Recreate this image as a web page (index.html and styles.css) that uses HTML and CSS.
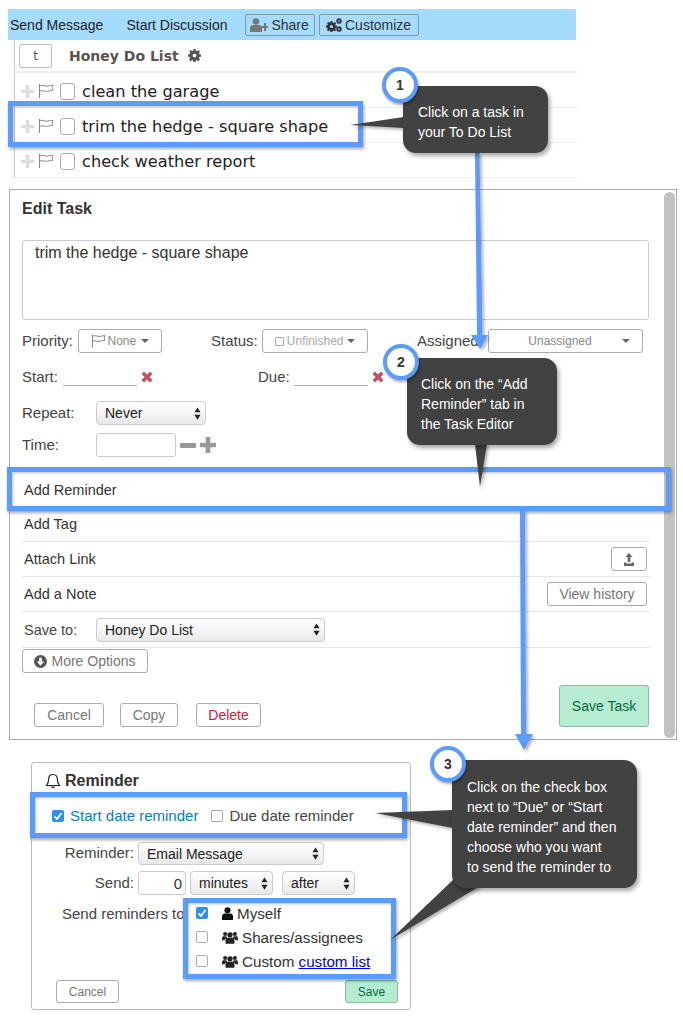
FILE: index.html
```html
<!DOCTYPE html>
<html lang="en">
<head>
    <meta charset="UTF-8">
    <title>Add a reminder to a task</title>
    <link rel="stylesheet" href="styles.css">
</head>
<body>
    <svg class="icon-defs" width="0" height="0">
        <symbol id="i-flag" viewBox="0 0 16 14">
            <path d="M1.5 0v14M2 2c3-2 5 1 8 0 2-.6 4-.6 5-.6-1 1.500-1 3.200-.2 5-2-.2-3 .2-5 .8-3 .8-5-1.500-7.800 0" fill="none" stroke="currentColor" stroke-width="1"/>
        </symbol>
        <symbol id="i-plus" viewBox="0 0 14 14">
            <path d="M5 0h4v5h5v4H9v5H5V9H0V5h5z" fill="currentColor"/>
        </symbol>
        <symbol id="i-x" viewBox="0 0 12 12">
            <path d="M.5 3L3 .5l3 3 3-3L11.500 3l-3 3 3 3L9 11.500l-3-3-3 3L.5 9l3-3z" fill="currentColor"/>
        </symbol>
        <symbol id="i-gear" viewBox="0 0 14 14">
            <path fill-rule="evenodd" d="M5.800 0h2.400l.3 1.900 1.100.5 1.600-1.100 1.700 1.700-1.100 1.600.5 1.100 1.900.3v2.400l-1.900.3-.5 1.100 1.100 1.600-1.700 1.700-1.600-1.100-1.100.5-.3 1.900H5.800l-.3-1.900-1.100-.5-1.600 1.100-1.700-1.700 1.100-1.600-.5-1.100L0 8.200V5.800l1.900-.3.5-1.100-1.100-1.600 1.700-1.700 1.600 1.100 1.100-.5zM7 5a2 2 0 1 0 0 4 2 2 0 0 0 0-4z" fill="currentColor"/>
        </symbol>
        <symbol id="i-user" viewBox="0 0 12 14">
            <circle cx="6" cy="3.500" r="3.300" fill="currentColor"/>
            <path d="M0 14V10c0-2 1.500-3 3-3h6c1.500 0 3 1 3 3v4z" fill="currentColor"/>
        </symbol>
        <symbol id="i-group" viewBox="0 0 18 14">
            <circle cx="9" cy="4" r="3" fill="currentColor"/>
            <circle cx="3.500" cy="3" r="2.300" fill="currentColor"/>
            <circle cx="14.500" cy="3" r="2.300" fill="currentColor"/>
            <path d="M4 14V10c0-2 1-2.800 2.500-2.800h5C13 7.200 14 8 14 10v4zM0 10V7.500C0 6 1 5.500 2 5.500h3c0 1 .5 1.500 1 2-2 .3-3 1-3 2.500zM18 10V7.500c0-1.500-1-2-2-2h-3c0 1-.5 1.500-1 2 2 .3 3 1 3 2.500z" fill="currentColor"/>
        </symbol>
        <symbol id="i-updown" viewBox="0 0 8 14">
            <path d="M4 0l3.500 5.500h-7zM4 14L.5 8.500h7z" fill="currentColor"/>
        </symbol>
        <symbol id="i-check" viewBox="0 0 12 12">
            <path d="M2.500 6.500l2.500 2.500 4.500-6" fill="none" stroke="#fff" stroke-width="1.800"/>
        </symbol>
    </svg>

    <div class="topbar">
        <span class="bar-link">Send Message</span>
        <span class="bar-link">Start Discussion</span>
        <span class="bar-btn btn-share">
            <svg class="bar-icon" width="18" height="14" viewBox="0 0 18 14"><use href="#i-user" width="12" height="14"/><path d="M11 8h3V5h2v3h2v2h-2v3h-2v-3h-3z" fill="currentColor"/></svg>
            Share
        </span>
        <span class="bar-btn btn-customize">
            <svg class="bar-icon dark" width="16" height="14" viewBox="0 0 16 14"><use href="#i-gear" y="3" width="11" height="11"/><use href="#i-gear" x="10" width="6" height="6"/><use href="#i-gear" x="10" y="8" width="6" height="6"/></svg>
            Customize
        </span>
    </div>

    <div class="task-list">
        <div class="list-head">
            <span class="t-btn">t</span>
            <span class="list-name">Honey Do List</span>
            <svg class="list-gear" width="13" height="13"><use href="#i-gear"/></svg>
        </div>
        <div class="task-row">
            <svg class="task-plus" width="13" height="13"><use href="#i-plus"/></svg>
            <svg class="task-flag" width="16" height="14"><use href="#i-flag"/></svg>
            <span class="task-check"></span>
            <span>clean the garage</span>
        </div>
        <div class="task-row">
            <svg class="task-plus" width="13" height="13"><use href="#i-plus"/></svg>
            <svg class="task-flag" width="16" height="14"><use href="#i-flag"/></svg>
            <span class="task-check"></span>
            <span>trim the hedge - square shape</span>
        </div>
        <div class="task-row">
            <svg class="task-plus" width="13" height="13"><use href="#i-plus"/></svg>
            <svg class="task-flag" width="16" height="14"><use href="#i-flag"/></svg>
            <span class="task-check"></span>
            <span>check weather report</span>
        </div>
    </div>

    <div class="edit-panel">
        <div class="edit-body">
            <h2 class="panel-title">Edit Task</h2>
            <div class="task-text">trim the hedge - square shape</div>

            <div class="field-row first">
                <div class="field f-priority">
                    <label>Priority:</label>
                    <span class="btn btn-priority">
                        <svg width="15" height="14"><use href="#i-flag"/></svg>
                        None<i class="caret"></i>
                    </span>
                </div>
                <div class="field f-status">
                    <label>Status:</label>
                    <span class="btn btn-status"><i class="mini-box"></i>Unfinished<i class="caret"></i></span>
                </div>
                <div class="field">
                    <label class="assigned-label">Assigned:</label>
                    <span class="btn btn-assigned"><span>Unassigned</span><i class="caret"></i></span>
                </div>
            </div>

            <div class="field-row dates">
                <div class="field f-start">
                    <label>Start:</label>
                    <span class="date-line"></span>
                    <svg class="clear-x" width="12" height="12"><use href="#i-x"/></svg>
                </div>
                <div class="field f-due">
                    <label>Due:</label>
                    <span class="date-line"></span>
                    <svg class="clear-x" width="12" height="12"><use href="#i-x"/></svg>
                </div>
            </div>

            <div class="field-row repeat">
                <label class="wide-label">Repeat:</label>
                <span class="sel sel-repeat">Never<svg width="7" height="13"><use href="#i-updown"/></svg></span>
            </div>

            <div class="field-row time">
                <label class="wide-label">Time:</label>
                <span class="text-input time-input"></span>
                <span class="time-minus"></span>
                <svg class="time-plus" width="16" height="16"><use href="#i-plus"/></svg>
            </div>

            <div class="tabs">
                <div class="tab-row plain">Add Reminder</div>
                <div class="tab-row">Add Tag</div>
                <div class="tab-row">
                    Attach Link
                    <span class="btn btn-upload">
                        <svg width="12" height="13" viewBox="0 0 12 13"><path d="M6 0l3.500 4H7.300v5H4.700V4H2.500zM1 9.500h2.500v1h5v-1H11V13H1z" fill="currentColor"/></svg>
                    </span>
                </div>
                <div class="tab-row">
                    Add a Note
                    <span class="btn btn-history">View history</span>
                </div>
                <div class="tab-row save-to">
                    <label class="save-label">Save to:</label>
                    <span class="sel sel-list">Honey Do List<svg width="7" height="13"><use href="#i-updown"/></svg></span>
                </div>
            </div>

            <span class="btn btn-more">
                <svg width="13" height="13" viewBox="0 0 14 14"><path fill-rule="evenodd" d="M7 0a7 7 0 1 1 0 14A7 7 0 0 1 7 0zM5.500 3v4H3l4 4.500L11 7H8.500V3z" fill="currentColor"/></svg>
                More Options
            </span>

            <div class="edit-foot">
                <div class="foot-left">
                    <span class="btn btn-foot btn-cancel">Cancel</span>
                    <span class="btn btn-foot btn-copy">Copy</span>
                    <span class="btn btn-foot btn-delete">Delete</span>
                </div>
                <span class="btn btn-save-task">Save Task</span>
            </div>
        </div>
        <div class="scrollbar"></div>
    </div>

    <div class="reminder-panel">
        <h2 class="reminder-title">
            <svg width="16" height="16" viewBox="0 0 16 16"><path d="M8 1.500c-2.800 0-4.300 2-4.300 4.500 0 3.500-1 5-2.200 6.500h13c-1.200-1.500-2.200-3-2.200-6.500 0-2.500-1.500-4.500-4.300-4.500zM6.500 13.500a1.600 1.600 0 0 0 3 0" fill="none" stroke="#222" stroke-width="1.200"/></svg>
            Reminder
        </h2>
        <div class="date-checks">
            <span class="check on"><svg width="12" height="12"><use href="#i-check"/></svg></span>
            <span class="start-label">Start date reminder</span>
            <span class="check"></span>
            <span>Due date reminder</span>
        </div>
        <div class="rem-row r-type">
            <label class="rem-label">Reminder:</label>
            <span class="sel sel-type">Email Message<svg width="7" height="13"><use href="#i-updown"/></svg></span>
        </div>
        <div class="rem-row r-send">
            <label class="rem-label">Send:</label>
            <span class="text-input send-input">0</span>
            <span class="sel sel-minutes">minutes<svg width="7" height="13"><use href="#i-updown"/></svg></span>
            <span class="sel sel-after">after<svg width="7" height="13"><use href="#i-updown"/></svg></span>
        </div>
        <div class="rem-to">
            <label class="to-label">Send reminders to:</label>
            <div class="to-list">
                <div class="to-row">
                    <span class="check on"><svg width="12" height="12"><use href="#i-check"/></svg></span>
                    <svg class="to-user" width="11" height="13"><use href="#i-user"/></svg>
                    <span>Myself</span>
                </div>
                <div class="to-row">
                    <span class="check"></span>
                    <svg class="to-group" width="16" height="13"><use href="#i-group"/></svg>
                    <span>Shares/assignees</span>
                </div>
                <div class="to-row">
                    <span class="check"></span>
                    <svg class="to-group" width="16" height="13"><use href="#i-group"/></svg>
                    <span>Custom <a href="#">custom list</a></span>
                </div>
            </div>
        </div>
        <div class="rem-foot">
            <span class="btn btn-rem-cancel">Cancel</span>
            <span class="btn btn-rem-save">Save</span>
        </div>
    </div>

    <!-- annotations drawn over the screenshot -->
    <div class="hl hl-task"></div>
    <div class="hl hl-tab"></div>
    <div class="hl hl-dates"></div>
    <div class="hl hl-to"></div>

    <svg class="arrows" width="683" height="1019" viewBox="0 0 683 1019">
        <defs>
            <filter id="soft" x="-20%" y="-20%" width="140%" height="140%">
                <feDropShadow dx="2" dy="2" stdDeviation="1.500" flood-color="#000" flood-opacity=".3"/>
            </filter>
        </defs>
        <g filter="url(#soft)" fill="#5b9bf9">
            <path d="M475 153h4.500l3 182h5.500l-8 14-9-14h6z"/>
            <path d="M520 510h5l1 224h7l-9 16-9-16h6z"/>
        </g>
        <g filter="url(#soft)" fill="#424242">
            <path d="M404 117L350 125l54 3z"/>
            <path d="M475 444l5 43 7-43z"/>
            <path d="M453 810L375 813l78 15z"/>
            <path d="M455 878L390 940l90-54z"/>
        </g>
    </svg>

    <div class="callout c-one">Click on a task in<br>your To Do List</div>
    <div class="callout c-two">Click on the “Add<br>Reminder” tab in<br>the Task Editor</div>
    <div class="callout c-three">Click on the check box<br>next to “Due” or “Start<br>date reminder” and then<br>choose who you want<br>to send the reminder to</div>

    <div class="step s-one">1</div>
    <div class="step s-two">2</div>
    <div class="step s-three">3</div>
</body>
</html>
```

FILE: styles.css
```css
html, body {
    margin: 0;
    padding: 0;
}
body {
    position: relative;
    height: 1019px;
    overflow: hidden;
    background: #fff;
    color: #333;
    font-family: "Liberation Sans", Arial, sans-serif;
    font-size: 14px;
}
.icon-defs {
    position: absolute;
}
label {
    color: #444;
}
h2 {
    margin: 0;
}

/* top bar */
.topbar {
    display: flex;
    align-items: center;
    margin: 9px 0 0 8px;
    width: 568px;
    height: 31px;
    padding-left: 2px;
    box-sizing: border-box;
    background: #a5dcfe;
    font-size: 14px;
    color: #222;
}
.bar-link {
    margin-right: 23px;
}
.bar-link + .bar-link {
    margin-right: 17px;
}
.bar-btn {
    display: flex;
    align-items: center;
    justify-content: center;
    box-sizing: border-box;
    gap: 3px;
    height: 22px;
    border: 1px solid #7f9aa8;
    border-radius: 2px;
    color: #333;
}
.btn-share {
    width: 70px;
    margin-right: 4px;
}
.btn-customize {
    width: 100px;
}
.bar-icon {
    color: #777;
}
.bar-icon.dark {
    color: #333;
}

/* to do list */
.task-list {
    margin-left: 14px;
    width: 562px;
    border-left: 1px solid #ccc;
    font-family: "DejaVu Sans", Verdana, sans-serif;
}
.list-head {
    display: flex;
    align-items: center;
    height: 31px;
    padding-left: 4px;
    border-bottom: 2px solid #eee;
}
.t-btn {
    width: 31px;
    height: 22px;
    line-height: 22px;
    margin-top: 1px;
    border: 1px solid #bbb;
    border-radius: 3px;
    text-align: center;
    font-size: 12px;
    color: #555;
}
.list-name {
    margin-left: 17px;
    font-size: 14px;
    font-weight: bold;
    color: #5c5350;
}
.list-gear {
    margin-left: 9px;
    color: #555;
}
.task-row {
    display: flex;
    align-items: center;
    box-sizing: border-box;
    height: 35px;
    padding: 2px 0 0 6px;
    border-bottom: 1px solid #eee;
    font-size: 16.2px;
    color: #222;
}
.task-plus {
    color: #ddd;
}
.task-flag {
    margin-left: 4px;
    color: #888;
}
.task-check {
    width: 13px;
    height: 15px;
    margin: 0 7px 0 6px;
    border: 1px solid #aaa;
    border-radius: 3px;
}

/* edit task panel */
.edit-panel {
    display: flex;
    box-sizing: border-box;
    margin: 11px 0 0 9px;
    width: 668px;
    height: 551px;
    border: 1px solid #aaa;
}
.edit-body {
    flex: 1;
    padding: 0 15px 0 12px;
}
.scrollbar {
    width: 11px;
    margin: 2px 1px 1px 0;
    border-radius: 6px;
    background: #c2c2c2;
}
.panel-title {
    padding-top: 10px;
    height: 50px;
    box-sizing: border-box;
    font-size: 16px;
    color: #333;
}
.task-text {
    box-sizing: border-box;
    height: 80px;
    padding: 3px 12px;
    border: 1px solid #ccc;
    border-radius: 3px;
    font-size: 16px;
    line-height: 17px;
    color: #333;
}
.field-row {
    display: flex;
    align-items: center;
    height: 24px;
    font-size: 15px;
}
.field-row label {
    margin-top: -2px;
}
.field-row.first {
    margin-top: 9px;
}
.field-row.dates,
.field-row.repeat {
    margin-top: 12px;
}
.field-row.time {
    margin-top: 8px;
}
.field {
    display: flex;
    align-items: center;
}
.f-priority {
    width: 189px;
}
.f-status {
    width: 206px;
}
.f-start {
    width: 236px;
}
.f-priority label {
    margin-right: 5px;
}
.f-status label {
    margin-right: 4px;
}
.assigned-label {
    width: 71px;
}
.btn {
    display: inline-flex;
    align-items: center;
    justify-content: center;
    box-sizing: border-box;
    height: 24px;
    border: 1px solid #aaa;
    border-radius: 3px;
    background: #fff;
    color: #777;
    font-size: 14px;
    white-space: nowrap;
}
.btn-priority {
    width: 84px;
    font-size: 12px;
    gap: 2px;
    color: #888;
}
.btn-priority svg {
    color: #777;
}
.btn-status {
    width: 106px;
    font-size: 12px;
    color: #aaa;
}
.mini-box {
    width: 7px;
    height: 7px;
    margin-right: 3px;
    border: 1px solid #aaa;
    border-radius: 1px;
}
.btn-assigned {
    width: 155px;
    font-size: 12px;
    color: #888;
    padding: 0 12px 0 0;
}
.btn-assigned span {
    flex: 1;
    text-align: center;
    padding-left: 12px;
}
.caret {
    width: 0;
    height: 0;
    margin-left: 3px;
    border: 4px solid transparent;
    border-top-color: #666;
    border-bottom: 0;
}
.date-line {
    width: 74px;
    height: 15px;
    margin-left: 5px;
    border-bottom: 1px solid #aaa;
    align-self: flex-start;
}
.dates .date-line {
    margin-top: 1px;
}
.f-due .date-line {
    margin-left: 4px;
}
.clear-x {
    margin-left: 4px;
    color: #c8505f;
}
.wide-label {
    width: 74px;
}
.sel {
    display: flex;
    align-items: center;
    justify-content: space-between;
    box-sizing: border-box;
    height: 24px;
    padding: 0 4px 0 8px;
    border: 1px solid #ccc;
    border-radius: 4px;
    background: linear-gradient(#fff, #f0f0f0 70%, #e8e8e8);
    color: #222;
    font-size: 14px;
}
.sel svg {
    color: #222;
}
.sel-repeat {
    width: 110px;
}
.sel-list {
    width: 229px;
}
.text-input {
    box-sizing: border-box;
    height: 24px;
    border: 1px solid #ccc;
    border-radius: 3px;
    background: #fff;
}
.time-input {
    width: 80px;
}
.time-minus {
    width: 16px;
    height: 5px;
    margin-left: 4px;
    border-radius: 1px;
    background: #999;
}
.time-plus {
    margin-left: 4px;
    color: #999;
}
.tabs {
    margin-top: 15px;
}
.tab-row {
    display: flex;
    align-items: center;
    justify-content: space-between;
    box-sizing: border-box;
    height: 35px;
    padding: 0 2px;
    border-bottom: 1px solid #e6e6e6;
    font-size: 14.5px;
    color: #333;
}
.tab-row.plain {
    border-bottom: 0;
}
.save-to {
    justify-content: flex-start;
    height: 36px;
}
.save-label {
    width: 72px;
}
.btn-upload {
    width: 36px;
    color: #666;
}
.btn-history {
    width: 100px;
}
.btn-more {
    width: 126px;
    margin-top: 1px;
    gap: 4px;
    color: #777;
}
.btn-more svg {
    color: #555;
}
.edit-foot {
    display: flex;
    justify-content: space-between;
    align-items: flex-end;
    margin-top: 12px;
}
.foot-left {
    display: flex;
    padding-left: 12px;
}
.btn-cancel {
    width: 70px;
}
.btn-copy {
    width: 58px;
    margin-left: 16px;
}
.btn-delete {
    width: 65px;
    margin-left: 18px;
    color: #e0103f;
}
.btn-save-task {
    width: 90px;
    height: 42px;
    background: #b5ecd2;
    border-color: #8fb8a5;
    color: #0d6a40;
}

/* reminder panel */
.reminder-panel {
    box-sizing: border-box;
    margin: 22px 0 0 31px;
    width: 380px;
    height: 248px;
    border: 1px solid #bbb;
    border-radius: 3px;
}
.reminder-title {
    display: flex;
    align-items: center;
    gap: 4px;
    height: 34px;
    padding: 1px 0 0 13px;
    font-size: 16px;
    color: #333;
}
.date-checks {
    display: flex;
    align-items: center;
    box-sizing: border-box;
    height: 37px;
    padding: 0 0 2px 20px;
    font-size: 15px;
    color: #444;
}
.check {
    display: inline-block;
    box-sizing: border-box;
    width: 12px;
    height: 12px;
    margin-right: 6px;
    border: 1px solid #aaa;
    border-radius: 2px;
    background: #fff;
    flex: none;
}
.check.on {
    border: 0;
    background: #2d8fee;
}
.check svg {
    display: block;
}
.start-label {
    color: #0a7cc4;
    margin-right: 13px;
}
.rem-row {
    display: flex;
    align-items: center;
    font-size: 15px;
}
.r-type {
    height: 23px;
    margin-top: 7px;
}
.r-send {
    height: 24px;
    margin-top: 6px;
}
.rem-label {
    box-sizing: border-box;
    width: 106px;
    margin-top: -2px;
    padding-right: 4px;
    text-align: right;
}
.sel-type {
    width: 186px;
    height: 23px;
}
.send-input {
    width: 48px;
    padding: 3px 3px 0 0;
    text-align: right;
    color: #333;
}
.sel-minutes {
    width: 83px;
    margin-left: 4px;
}
.sel-after {
    width: 73px;
    margin-left: 9px;
}
.rem-to {
    display: flex;
    padding-left: 30px;
    margin-top: 6px;
    height: 79px;
    font-size: 15px;
}
.to-label {
    width: 134px;
    margin-top: 4px;
    white-space: nowrap;
}
.to-list {
    font-size: 15.2px;
}
.to-row {
    display: flex;
    align-items: center;
    height: 24px;
    color: #333;
}
.to-row .check {
    margin-right: 14px;
}
.to-user {
    color: #111;
    margin-right: 4px;
}
.to-group {
    color: #222;
    margin-right: 4px;
}
.rem-foot {
    display: flex;
    justify-content: space-between;
    padding: 0 12px 0 24px;
}
.btn-rem-cancel {
    width: 63px;
    height: 23px;
    font-size: 12px;
}
.btn-rem-save {
    width: 53px;
    height: 23px;
    font-size: 12px;
    background: #b5ecd2;
    border-color: #8fb8a5;
    color: #0d6a40;
}

/* annotations */
.hl {
    position: absolute;
    box-sizing: border-box;
    border: 5px solid #5b9bf9;
    box-shadow: 1px 2px 3px rgba(0, 0, 0, .35), inset 1px 1px 3px rgba(0, 0, 0, .25);
}
.hl-task {
    left: 8px;
    top: 101px;
    width: 355px;
    height: 46px;
}
.hl-tab {
    left: 7px;
    top: 467px;
    width: 664px;
    height: 44px;
}
.hl-dates {
    left: 30px;
    top: 792px;
    width: 377px;
    height: 46px;
}
.hl-to {
    left: 183px;
    top: 898px;
    width: 213px;
    height: 81px;
}
.arrows {
    position: absolute;
    left: 0;
    top: 0;
}
.callout {
    position: absolute;
    box-sizing: border-box;
    border-radius: 13px;
    background: #424242;
    box-shadow: 2px 3px 4px rgba(0, 0, 0, .35);
    color: #fff;
    font-size: 14px;
    line-height: 20px;
}
.c-one {
    left: 403px;
    top: 86px;
    width: 145px;
    height: 67px;
    padding: 16px 0 0 15px;
}
.c-two {
    left: 407px;
    top: 358px;
    width: 150px;
    height: 87px;
    padding: 16px 0 0 14px;
}
.c-three {
    left: 452px;
    top: 760px;
    width: 185px;
    height: 128px;
    padding: 17px 0 0 15px;
}
.step {
    position: absolute;
    box-sizing: border-box;
    width: 36px;
    height: 36px;
    border: 4px solid #5b9bf9;
    border-radius: 50%;
    background: #fff;
    box-shadow: 1px 2px 3px rgba(0, 0, 0, .35);
    text-align: center;
    line-height: 28px;
    font-size: 14px;
    font-weight: bold;
    color: #333;
}
.s-one {
    left: 382px;
    top: 67px;
}
.s-two {
    left: 383px;
    top: 344px;
}
.s-three {
    left: 430px;
    top: 746px;
}
```
